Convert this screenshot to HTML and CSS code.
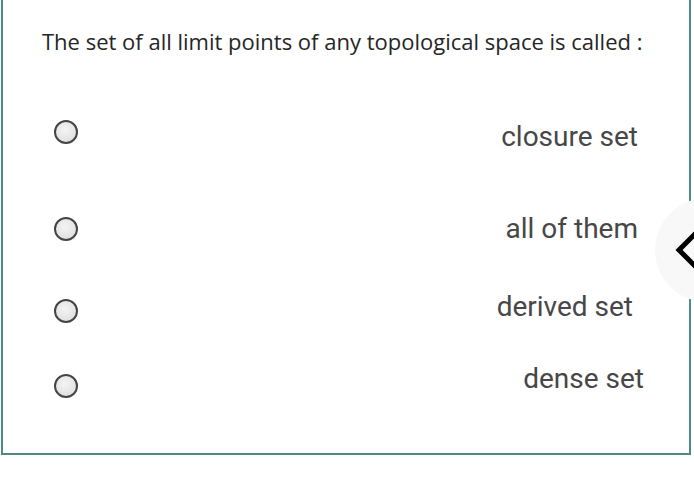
FILE: index.html
```html
<!DOCTYPE html>
<html>
<head>
<meta charset="utf-8">
<link rel="stylesheet" href="styles.css">
</head>
<body>
<div class="card">
  <div class="question">The set of all limit points of any topological space is called :</div>
  <div class="options">
    <div class="option opt-1">
      <span class="radio"></span>
      <span class="label">closure set</span>
    </div>
    <div class="option opt-2">
      <span class="radio"></span>
      <span class="label">all of them</span>
    </div>
    <div class="option opt-3">
      <span class="radio"></span>
      <span class="label">derived set</span>
    </div>
    <div class="option opt-4">
      <span class="radio"></span>
      <span class="label">dense set</span>
    </div>
  </div>
</div>
<div class="nav-clip">
  <div class="nav-back">
    <svg class="chevron" width="40" height="60" viewBox="0 0 40 60">
      <polyline points="22,14 7,29 22,44" fill="none" stroke="#000" stroke-width="5" stroke-linecap="square"/>
    </svg>
  </div>
</div>
</body>
</html>
```

FILE: styles.css
```css
html, body {
  margin: 0;
  padding: 0;
  background: #ffffff;
  overflow: hidden;
}
body {
  width: 694px;
  height: 485px;
  position: relative;
}
.card {
  box-sizing: border-box;
  width: 690px;
  height: 457px;
  margin: -2px 0 0 1px;
  border: 2px solid #4d8a82;
  background: #fff;
  padding: 27px 0 0 0;
}
.question {
  padding-left: 39px;
  font-family: "Open Sans", "Liberation Sans", sans-serif;
  font-size: 22px;
  line-height: 28px;
  color: #262626;
  white-space: nowrap;
}
.options {
  display: flex;
  flex-direction: column;
}
.option {
  height: 40px;
  display: flex;
  align-items: center;
  justify-content: space-between;
}
.radio {
  box-sizing: border-box;
  width: 24px;
  height: 24px;
  margin-left: 51px;
  border-radius: 50%;
  border: 2.5px solid #454545;
  background: radial-gradient(circle at 45% 40%, #f4f4f4 0%, #e2e2e2 70%, #d6d6d6 100%);
}
.label {
  font-family: Roboto, "Liberation Sans", sans-serif;
  font-size: 28px;
  line-height: 34px;
  color: #474747;
}
.opt-1 { margin-top: 57px; }
.opt-1 .label { margin-right: 51px; margin-top: 10px; }
.opt-2 { margin-top: 57px; }
.opt-2 .label { margin-right: 51px; }
.opt-3 { margin-top: 42px; }
.opt-3 .label { margin-right: 56px; margin-bottom: 8px; }
.opt-4 { margin-top: 35px; }
.opt-4 .label { margin-right: 45px; margin-bottom: 14px; }
.nav-clip {
  position: absolute;
  left: 655px;
  top: 198px;
  width: 39px;
  height: 104px;
  overflow: hidden;
}
.nav-back {
  position: relative;
  width: 104px;
  height: 104px;
  border-radius: 50%;
  background: #f8f8f8;
}
.chevron {
  position: absolute;
  left: 17px;
  top: 23px;
}
```
